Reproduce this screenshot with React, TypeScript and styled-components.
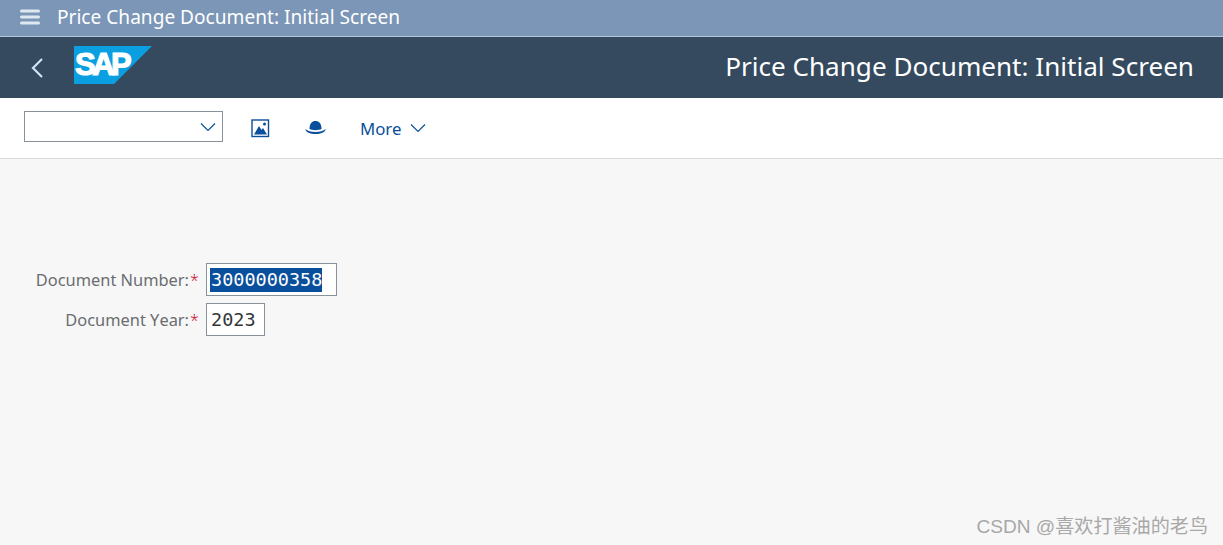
import React from 'react';
import styled, { createGlobalStyle } from 'styled-components';

const GlobalStyle = createGlobalStyle`
  html, body { margin: 0; padding: 0; height: 100%; }
  body { font-family: 'Noto Sans', 'Open Sans', sans-serif; background: #f7f7f7; overflow: hidden; }
  #root { height: 100%; }
`;

const Page = styled.div`
  position: relative;
  display: flex;
  flex-direction: column;
  height: 545px;
  background: #f7f7f7;
`;

const TopBar = styled.div`
  display: flex;
  align-items: center;
  gap: 16px;
  box-sizing: border-box;
  height: 37px;
  padding: 0 0 2px 20px;
  background: #7b96b6;
  border-bottom: 1px solid #b5c5d8;
  color: #fff;
  font-size: 19.1px;
`;

const HeaderBar = styled.div`
  display: flex;
  align-items: center;
  box-sizing: border-box;
  height: 61px;
  padding: 0 29px 0 30px;
  background: #354a5f;
`;

const BackIcon = styled.svg`
  width: 16px;
  height: 24px;
  margin-right: 28px;
`;

const Logo = styled.svg`
  width: 78px;
  height: 38px;
  margin-bottom: 6px;
`;

const HeaderTitle = styled.div`
  margin: 0 0 3px auto;
  color: #fff;
  font-size: 26.1px;
`;

const Toolbar = styled.div`
  display: flex;
  align-items: center;
  box-sizing: border-box;
  height: 61px;
  padding-left: 24px;
  background: #fff;
  border-bottom: 1px solid #d9d9d9;
`;

const Select = styled.div`
  display: flex;
  align-items: center;
  justify-content: flex-end;
  box-sizing: border-box;
  width: 199px;
  height: 31px;
  margin-bottom: 3px;
  padding-right: 6px;
  background: #fff;
  border: 1px solid #89919a;
`;

const ToolIcon = styled.svg<{ $gap: number; $w: number }>`
  width: ${p => p.$w}px;
  height: 20px;
  margin-left: ${p => p.$gap}px;
`;

const MoreButton = styled.div`
  display: flex;
  align-items: center;
  gap: 9px;
  margin-left: 34px;
  color: #0a4f9c;
  font-size: 16.8px;
`;

const Form = styled.div`
  display: flex;
  flex-direction: column;
  gap: 7px;
  padding-top: 104px;
`;

const Row = styled.div`
  display: flex;
  align-items: center;
`;

const Label = styled.div`
  width: 189px;
  text-align: right;
  color: #6a6d70;
  font-size: 16.4px;
  font-kerning: none;
`;

const Required = styled.span`
  width: 17px;
  padding-left: 1px;
  box-sizing: border-box;
  color: #c8102e;
  font-size: 16px;
  font-weight: 300;
`;

const Field = styled.div<{ $width: number }>`
  box-sizing: border-box;
  width: ${p => p.$width}px;
  height: 33px;
  padding: 0 3px 0 4px;
  line-height: 31px;
  white-space: nowrap;
  background: #fff;
  border: 1px solid #89919a;
  color: #32363a;
  font-family: 'DejaVu Sans Mono', monospace;
  font-size: 18.5px;
`;

const Selected = styled.span`
  display: inline-block;
  margin-left: -1px;
  padding-left: 1px;
  line-height: 24px;
  background: #0a4f9c;
  color: #fff;
`;

const Watermark = styled.div`
  position: absolute;
  right: 15px;
  bottom: 6px;
  color: #a8a8a8;
  font-family: 'Liberation Sans', 'Noto Sans CJK SC', sans-serif;
  font-size: 19.1px;
`;

const Chevron = ({ color = '#0a4f9c' }: { color?: string }) => (
  <svg width="16" height="10" viewBox="0 0 16 10">
    <path d="M1 1.5 L8 8.5 L15 1.5" fill="none" stroke={color} strokeWidth="1.2" />
  </svg>
);

export default function App() {
  return (
    <>
      <GlobalStyle />
      <Page>
        <TopBar>
          <svg width="21" height="16" viewBox="0 0 21 16">
            <g fill="#dfe7f0">
              <rect x="0" y="0.5" width="20" height="3" rx="1.5" />
              <rect x="0" y="6.5" width="20" height="3" rx="1.5" />
              <rect x="0" y="12.5" width="20" height="3" rx="1.5" />
            </g>
          </svg>
          Price Change Document: Initial Screen
        </TopBar>
        <HeaderBar>
          <BackIcon viewBox="0 0 16 24">
            <path d="M12 3 L3 12 L12 21" fill="none" stroke="#cfe3f5" strokeWidth="2.2" />
          </BackIcon>
          <Logo viewBox="0 0 78 38">
            <polygon points="0,0 78,0 40,38 0,38" fill="#0a9fe0" />
            <text x="1" y="29" fill="#fff" stroke="#fff" strokeWidth="1.2" fontFamily="Liberation Sans" fontWeight="700" fontSize="31" letterSpacing="-3.5">SAP</text>
          </Logo>
          <HeaderTitle>Price Change Document: Initial Screen</HeaderTitle>
        </HeaderBar>
        <Toolbar>
          <Select><Chevron /></Select>
          <ToolIcon $gap={28} $w={19} viewBox="0 0 19 20">
            <rect x="1" y="2" width="16.5" height="16.5" fill="none" stroke="#0a4f9c" strokeWidth="1.4" />
            <path d="M3 16.5 L8 8 L10.5 12 L12 10 L16 16.5 Z" fill="#0a4f9c" />
            <circle cx="13.5" cy="6" r="1.5" fill="#0a4f9c" />
          </ToolIcon>
          <ToolIcon $gap={35} $w={21} viewBox="0 0 21 20">
            <path d="M4.5 11 C4.5 5.5 7 3 10.5 3 C14 3 16.5 5.5 16.5 11 C14 12.5 7 12.5 4.5 11 Z" fill="#0a4f9c" />
            <path d="M0.5 11 C4 15 17 15 20.5 11 C20.5 14.5 16 16 10.5 16 C5 16 0.5 14.5 0.5 11 Z" fill="#0a4f9c" />
          </ToolIcon>
          <MoreButton>More <Chevron /></MoreButton>
        </Toolbar>
        <Form>
          <Row>
            <Label>Document Number:</Label>
            <Required>*</Required>
            <Field $width={131}><Selected>3000000358</Selected></Field>
          </Row>
          <Row>
            <Label>Document Year:</Label>
            <Required>*</Required>
            <Field $width={59}>2023</Field>
          </Row>
        </Form>
        <Watermark>CSDN @喜欢打酱油的老鸟</Watermark>
      </Page>
    </>
  );
}
